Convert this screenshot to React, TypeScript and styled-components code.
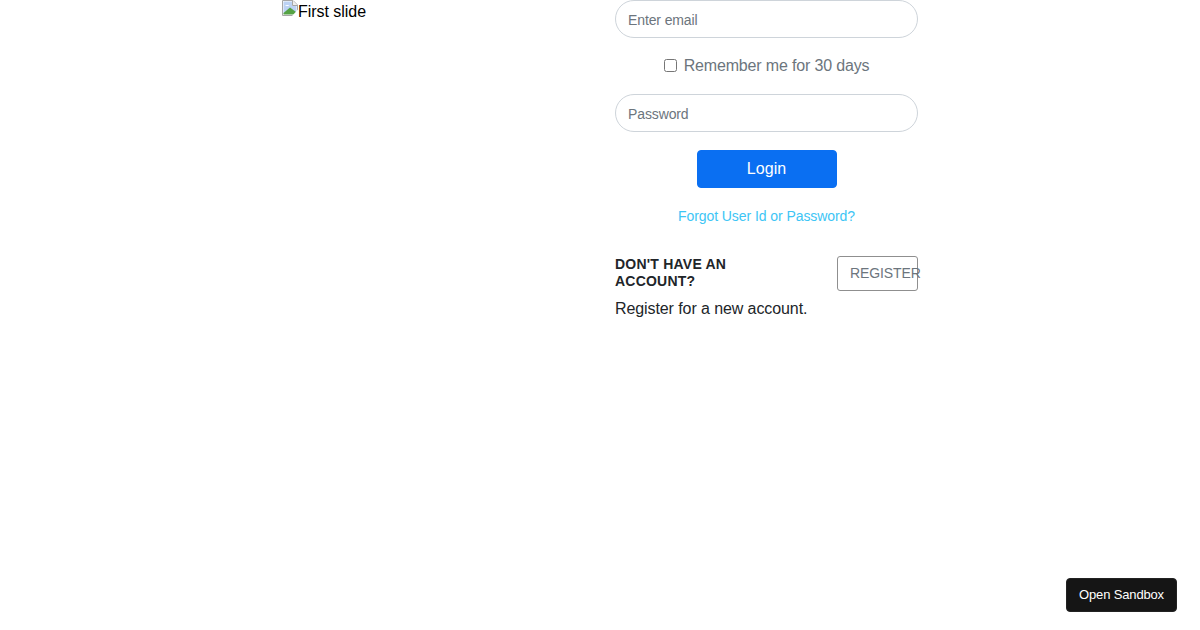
import React from 'react';
import styled, { createGlobalStyle } from 'styled-components';

const App = () => {
  return (
    <>
      <GlobalStyle />
      <Page>
        <SlideColumn>
          <SlideAlt>
            <BrokenImage />
            First slide
          </SlideAlt>
        </SlideColumn>
        <FormColumn>
          <PillInput type="email" placeholder="Enter email" />
          <RememberRow>
            <Checkbox type="checkbox" />
            <RememberLabel>Remember me for 30 days</RememberLabel>
          </RememberRow>
          <PillInput type="password" placeholder="Password" />
          <LoginButton>Login</LoginButton>
          <ForgotLink href="#">Forgot User Id or Password?</ForgotLink>
          <RegisterRow>
            <RegisterTitle>DON'T HAVE AN ACCOUNT?</RegisterTitle>
            <RegisterButton>REGISTER</RegisterButton>
          </RegisterRow>
          <RegisterText>Register for a new account.</RegisterText>
        </FormColumn>
      </Page>
      <SandboxButton>Open Sandbox</SandboxButton>
    </>
  );
};

const BrokenImage = () => (
  <BrokenIcon width="16" height="16" viewBox="0 0 16 16">
    <path d="M0.5 0.5H11L15.5 5V15.5H0.5Z" fill="#fff" stroke="#a6a6a6" />
    <path d="M1.5 1.5H10V6H14.5V12L1.5 14Z" fill="#bcd2f4" />
    <path d="M10.5 0.5V5.5H15.5" fill="#eeeeee" stroke="#a6a6a6" />
    <path d="M1.5 14.5V13L8 7.5L14 12V14.5Z" fill="#55a244" />
    <path d="M3 6C4 4.5 6.5 4.5 7.5 6Z" fill="#fff" />
    <path d="M10 16L16 9.5V16Z" fill="#fff" />
  </BrokenIcon>
);

export default App;

const GlobalStyle = createGlobalStyle`
  html, body {
    margin: 0;
    background: #fff;
  }
  body {
    font-family: "Liberation Sans", Arial, sans-serif;
    font-size: 16px;
    line-height: 1.5;
    color: #212529;
  }
  * {
    box-sizing: border-box;
  }
`;

const Page = styled.div`
  width: 1140px;
  margin: 0 auto;
  display: grid;
  grid-template-columns: 333px 303px;
  padding-left: 252px;
`;

const SlideColumn = styled.div`
  height: 24px;
`;

const SlideAlt = styled.div`
  color: #000;
  line-height: 24px;
  white-space: nowrap;
  letter-spacing: -0.04px;
`;

const BrokenIcon = styled.svg`
  vertical-align: top;
`;

const FormColumn = styled.div`
  display: flex;
  flex-direction: column;
  align-items: center;
`;

const PillInput = styled.input`
  display: block;
  width: 100%;
  height: 38px;
  padding: 7px 12px 5px;
  font-family: inherit;
  font-size: 14px;
  line-height: 24px;
  letter-spacing: -0.12px;
  color: #495057;
  background: #fff;
  border: 1px solid #ced4da;
  border-radius: 30px;
  outline: none;
  &::placeholder {
    color: #6c757d;
    opacity: 1;
  }
`;

const RememberRow = styled.div`
  display: flex;
  align-items: center;
  height: 24px;
  margin: 16px 0;
`;

const Checkbox = styled.input`
  appearance: none;
  width: 13px;
  height: 13px;
  margin: -1px 7px 0 0;
  background: #fff;
  border: 1px solid #767676;
  border-radius: 2.5px;
`;

const RememberLabel = styled.label`
  color: #6c757d;
  letter-spacing: -0.16px;
`;

const LoginButton = styled.button`
  width: 140px;
  height: 38px;
  margin-top: 18px;
  padding: 6px 12px;
  font-family: inherit;
  font-size: 16px;
  line-height: 24px;
  letter-spacing: 0.03px;
  color: #fff;
  background: #0a6ff2;
  border: 1px solid #0a6ff2;
  border-radius: 4px;
`;

const ForgotLink = styled.a`
  margin-top: 18px;
  font-size: 14px;
  line-height: 21px;
  letter-spacing: -0.07px;
  color: #3dc5f5;
  text-decoration: none;
`;

const RegisterRow = styled.div`
  display: flex;
  justify-content: space-between;
  align-items: center;
  align-self: stretch;
  margin-top: 29px;
`;

const RegisterTitle = styled.h6`
  width: 152px;
  margin: -2px 0 0;
  font-size: 14px;
  font-weight: 700;
  line-height: 17px;
  letter-spacing: 0.22px;
  color: #212529;
`;

const RegisterButton = styled.button`
  width: 81px;
  height: 35px;
  padding: 0 0 0 12px;
  font-family: inherit;
  font-size: 14px;
  line-height: 21px;
  letter-spacing: -0.1px;
  text-align: left;
  white-space: nowrap;
  color: #6c757d;
  background: transparent;
  border: 1px solid #8f8f8f;
  border-radius: 3px;
`;

const RegisterText = styled.p`
  align-self: stretch;
  margin: 6px 0 0;
  line-height: 24px;
  letter-spacing: -0.09px;
`;

const SandboxButton = styled.button`
  position: fixed;
  right: 23px;
  bottom: 18px;
  width: 111px;
  height: 34px;
  padding: 0 0 2px;
  font-family: "Liberation Sans", Arial, sans-serif;
  font-size: 13px;
  letter-spacing: -0.15px;
  color: #fff;
  background: #151515;
  border: 1px solid #222;
  border-radius: 4px;
`;
